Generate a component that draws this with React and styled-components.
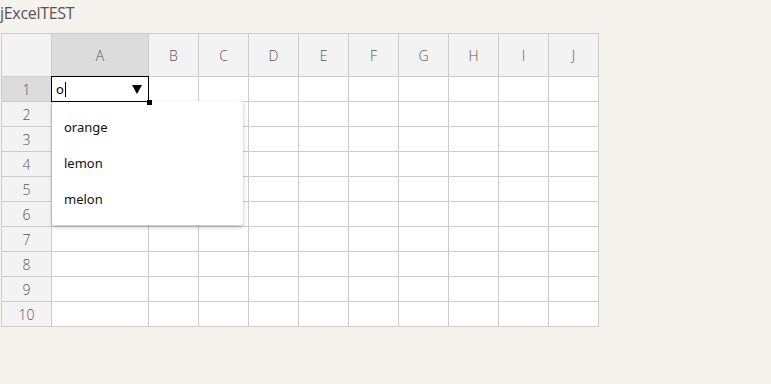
import React from 'react';
import { styled, createGlobalStyle } from 'styled-components';

const columns = ['A', 'B', 'C', 'D', 'E', 'F', 'G', 'H', 'I', 'J'];
const rows = [1, 2, 3, 4, 5, 6, 7, 8, 9, 10];
const options = ['orange', 'lemon', 'melon'];

const App = () => {
  return (
    <Page>
      <GlobalStyle />
      <Title>jExcelTEST</Title>
      <Sheet>
        <thead>
          <tr>
            <Corner />
            {columns.map((c) => (
              <ColHead key={c} $selected={c === 'A'} $wide={c === 'A'}>{c}</ColHead>
            ))}
          </tr>
        </thead>
        <tbody>
          {rows.map((r) => (
            <tr key={r}>
              <RowHead $selected={r === 1}>{r}</RowHead>
              {columns.map((c) =>
                r === 1 && c === 'A' ? (
                  <EditCell key={c}>
                    <Editor>
                      <span>o<Caret /></span>
                      <Arrow />
                      <Handle />
                    </Editor>
                    <Dropdown>
                      {options.map((o) => (
                        <Option key={o}>{o}</Option>
                      ))}
                    </Dropdown>
                  </EditCell>
                ) : (
                  <Cell key={c} />
                )
              )}
            </tr>
          ))}
        </tbody>
      </Sheet>
    </Page>
  );
};

export default App;

const GlobalStyle = createGlobalStyle`
  html, body {
    margin: 0;
    padding: 0;
    background: #f6f3ef;
  }
  body {
    font-family: "Open Sans", "Noto Sans", sans-serif;
  }
`;

const Page = styled.div`
  width: 771px;
  height: 384px;
  background: #f6f3ef;
`;

const Title = styled.div`
  height: 33px;
  padding-top: 3px;
  box-sizing: border-box;
  font-size: 16px;
  line-height: 20px;
  color: #555;
  letter-spacing: -0.3px;
`;

const Sheet = styled.table`
  border-collapse: collapse;
  table-layout: fixed;
  margin-left: 1px;
  background: #fff;
  font-family: "Open Sans", sans-serif;
`;

const Corner = styled.th`
  width: 49px;
  height: 42px;
  padding: 0;
  background: #f3f3f3;
  border: 1px solid #cccccc;
`;

const ColHead = styled.th`
  width: ${(p) => (p.$wide ? '96px' : '49px')};
  height: 42px;
  padding: 0;
  background: ${(p) => (p.$selected ? '#dcdcdc' : '#f3f3f3')};
  border: 1px solid #cccccc;
  font-size: 14px;
  font-weight: 300;
  color: #555;
  text-align: center;
`;

const RowHead = styled.td`
  height: 24px;
  padding: 0;
  background: ${(p) => (p.$selected ? '#dcdcdc' : '#f3f3f3')};
  border: 1px solid #cccccc;
  font-size: 14px;
  font-weight: 300;
  color: #555;
  text-align: center;
`;

const Cell = styled.td`
  height: 24px;
  padding: 0;
  border: 1px solid #cccccc;
  background: #fff;
`;

const EditCell = styled(Cell)`
  position: relative;
`;

/* editor overlay: sits on top of the cell, including its grid lines */
const Editor = styled.div`
  position: absolute;
  top: -1px;
  left: -1px;
  right: -1px;
  height: 26px;
  box-sizing: border-box;
  border: 1px solid #000;
  background: #fff;
  display: flex;
  align-items: center;
  justify-content: space-between;
  padding: 0 6px 0 4px;
  font-family: "Noto Sans", sans-serif;
  font-size: 13px;
  color: #000;
  z-index: 3;
`;

const Caret = styled.span`
  display: inline-block;
  width: 1px;
  height: 15px;
  margin-left: 1px;
  background: #000;
  vertical-align: -3px;
`;

const Arrow = styled.span`
  width: 0;
  height: 0;
  border-left: 5px solid transparent;
  border-right: 5px solid transparent;
  border-top: 9px solid #000;
`;

const Handle = styled.div`
  position: absolute;
  right: -4px;
  bottom: -4px;
  width: 5px;
  height: 5px;
  background: #000;
`;

const Dropdown = styled.div`
  position: absolute;
  top: 24px;
  left: 0;
  width: 191px;
  padding: 8px 0 8px;
  background: #fff;
  border-radius: 3px;
  box-shadow: 0 2px 4px rgba(0, 0, 0, 0.25);
  z-index: 2;
`;

const Option = styled.div`
  height: 36px;
  line-height: 36px;
  padding-left: 12px;
  font-family: "Noto Sans", sans-serif;
  font-size: 13px;
  font-weight: 400;
  color: #111;
`;
